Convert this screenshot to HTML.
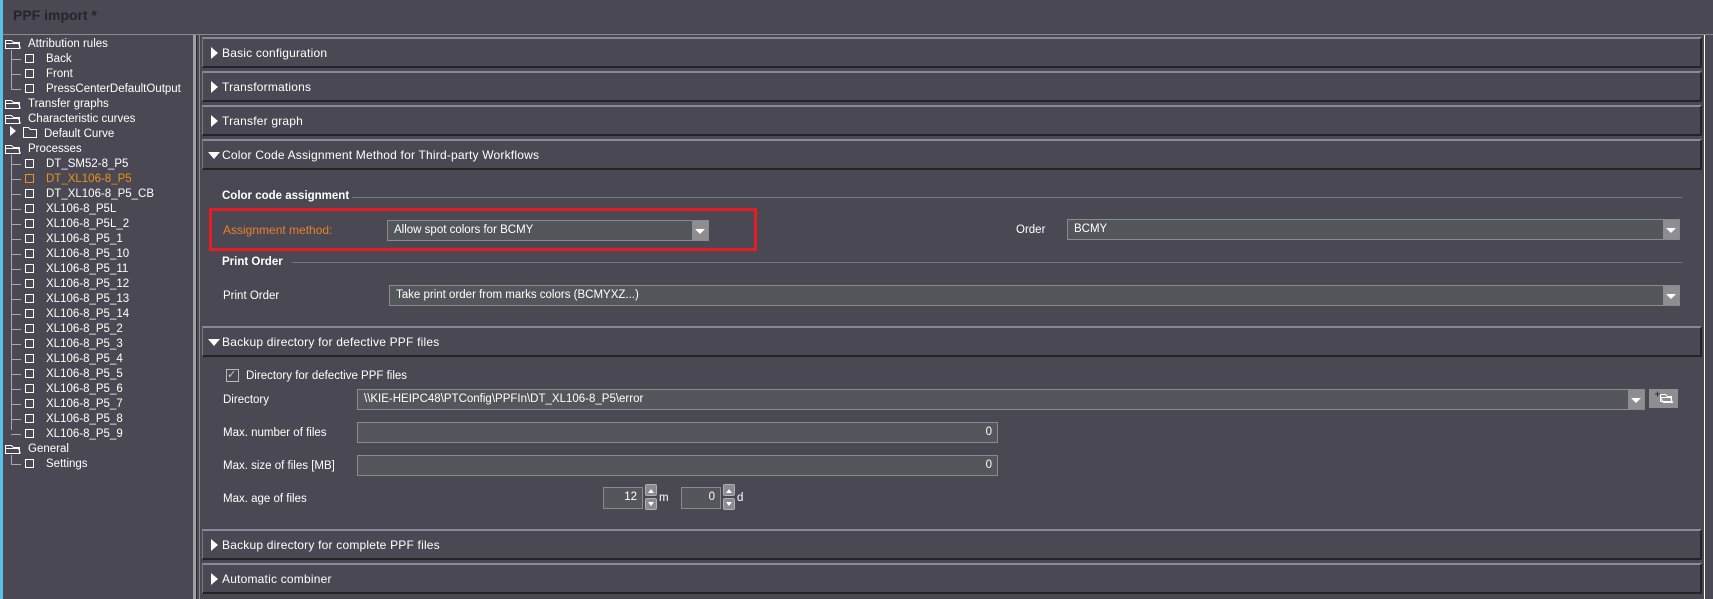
<!DOCTYPE html>
<html><head><meta charset="utf-8"><style>
*{margin:0;padding:0;box-sizing:border-box}
body{width:1713px;height:599px;background:#4a4852;position:relative;overflow:hidden;font-family:"Liberation Sans",sans-serif;font-size:11.5px;color:#fff}
.a{position:absolute}
.t{position:absolute;white-space:nowrap;line-height:14px}
.hd{position:absolute;left:202px;width:1500px;height:31px;border-top:2px solid #8a8894;border-left:1px solid #7a7882;border-right:2px solid #242328;border-bottom:2px solid #242328;background:#4a4852}
.hd span{position:absolute;left:19px;top:7px;font-size:12px;letter-spacing:.2px;white-space:nowrap}
.tri{position:absolute;left:8px;top:8px;width:0;height:0;border-top:6px solid transparent;border-bottom:6px solid transparent;border-left:7px solid #fff}
.trd{position:absolute;left:5px;top:11px;width:0;height:0;border-left:6px solid transparent;border-right:6px solid transparent;border-top:7px solid #fff}
.f{position:absolute;background:#53565a;border:1px solid #8a8a8c;height:21px}
.f span{position:absolute;top:3px;white-space:nowrap}
.cb{position:absolute;right:0;top:0;width:16px;height:19px;background:#8e8e92}
.cb:after{content:"";position:absolute;left:3px;top:8px;border-left:5px solid transparent;border-right:5px solid transparent;border-top:5px solid #fff}
.sq{position:absolute;width:9px;height:9px;border:1px solid #fff}
.sb{position:absolute;width:12px;height:12px;background:#8a8a90;border:1px solid #b0b0b4;border-radius:2px}
</style></head><body>
<div class="a" style="left:0;top:0;width:3px;height:599px;background:#5bc0e8"></div>
<div class="t" style="left:13px;top:8px;font-size:14px;font-weight:bold;color:#26252a">PPF import *</div>
<div class="a" style="left:3px;top:34px;width:1710px;height:1px;background:#8a8a8e"></div>
<div class="a" style="left:193px;top:35px;width:3px;height:564px;background:#a0a0a4"></div>
<div class="a" style="left:196px;top:35px;width:1px;height:564px;background:#2e2d33"></div>
<div class="a" style="left:199px;top:35px;width:1px;height:564px;background:#8a8a8e"></div>
<div class="a" style="left:1704px;top:35px;width:1px;height:564px;background:#fff"></div>

<svg class="a" style="left:0;top:0" width="193" height="599">
<g fill="none" stroke="#fff" stroke-width="1">
<path d="M5.5 40.5h6l2 2h6v6h-14z M5.5 43.5h13l2 5"/>
<path d="M5.5 100.5h6l2 2h6v6h-14z M5.5 103.5h13l2 5"/>
<path d="M5.5 115.5h6l2 2h6v6h-14z M5.5 118.5h13l2 5"/>
<path d="M5.5 145.5h6l2 2h6v6h-14z M5.5 148.5h13l2 5"/>
<path d="M5.5 445.5h6l2 2h6v6h-14z M5.5 448.5h13l2 5"/>
<path d="M23.5 127.5h5l2 2h6v8h-13z"/>
</g>
<path d="M10 126l6 5-6 5z" fill="#fff"/>
<g stroke="#aaa" stroke-width="1">
<path d="M11.5 50v39M11 59.5h10M11 74.5h10M11 89.5h10"/>
<path d="M11.5 155v275M11 164.5h10M11 179.5h10M11 194.5h10M11 209.5h10M11 224.5h10M11 239.5h10M11 254.5h10M11 269.5h10M11 284.5h10M11 299.5h10M11 314.5h10M11 329.5h10M11 344.5h10M11 359.5h10M11 374.5h10M11 389.5h10M11 404.5h10M11 419.5h10M11 434.5h10"/>
<path d="M11.5 455v9M11 464.5h10"/>
</g>
</svg>
<div class="t" style="left:28px;top:37px">Attribution rules</div>
<div class="sq" style="left:25px;top:54px"></div><div class="t" style="left:46px;top:52px">Back</div>
<div class="sq" style="left:25px;top:69px"></div><div class="t" style="left:46px;top:67px">Front</div>
<div class="sq" style="left:25px;top:84px"></div><div class="t" style="left:46px;top:82px">PressCenterDefaultOutput</div>
<div class="t" style="left:28px;top:97px">Transfer graphs</div>
<div class="t" style="left:28px;top:112px">Characteristic curves</div>
<div class="t" style="left:44px;top:127px">Default Curve</div>
<div class="t" style="left:28px;top:142px">Processes</div>
<div class="sq" style="left:25px;top:159px"></div><div class="t" style="left:46px;top:157px">DT_SM52-8_P5</div>
<div class="sq" style="left:25px;top:174px;border-color:#f0901a"></div><div class="t" style="left:46px;top:172px;color:#f0901a">DT_XL106-8_P5</div>
<div class="sq" style="left:25px;top:189px"></div><div class="t" style="left:46px;top:187px">DT_XL106-8_P5_CB</div>
<div class="sq" style="left:25px;top:204px"></div><div class="t" style="left:46px;top:202px">XL106-8_P5L</div>
<div class="sq" style="left:25px;top:219px"></div><div class="t" style="left:46px;top:217px">XL106-8_P5L_2</div>
<div class="sq" style="left:25px;top:234px"></div><div class="t" style="left:46px;top:232px">XL106-8_P5_1</div>
<div class="sq" style="left:25px;top:249px"></div><div class="t" style="left:46px;top:247px">XL106-8_P5_10</div>
<div class="sq" style="left:25px;top:264px"></div><div class="t" style="left:46px;top:262px">XL106-8_P5_11</div>
<div class="sq" style="left:25px;top:279px"></div><div class="t" style="left:46px;top:277px">XL106-8_P5_12</div>
<div class="sq" style="left:25px;top:294px"></div><div class="t" style="left:46px;top:292px">XL106-8_P5_13</div>
<div class="sq" style="left:25px;top:309px"></div><div class="t" style="left:46px;top:307px">XL106-8_P5_14</div>
<div class="sq" style="left:25px;top:324px"></div><div class="t" style="left:46px;top:322px">XL106-8_P5_2</div>
<div class="sq" style="left:25px;top:339px"></div><div class="t" style="left:46px;top:337px">XL106-8_P5_3</div>
<div class="sq" style="left:25px;top:354px"></div><div class="t" style="left:46px;top:352px">XL106-8_P5_4</div>
<div class="sq" style="left:25px;top:369px"></div><div class="t" style="left:46px;top:367px">XL106-8_P5_5</div>
<div class="sq" style="left:25px;top:384px"></div><div class="t" style="left:46px;top:382px">XL106-8_P5_6</div>
<div class="sq" style="left:25px;top:399px"></div><div class="t" style="left:46px;top:397px">XL106-8_P5_7</div>
<div class="sq" style="left:25px;top:414px"></div><div class="t" style="left:46px;top:412px">XL106-8_P5_8</div>
<div class="sq" style="left:25px;top:429px"></div><div class="t" style="left:46px;top:427px">XL106-8_P5_9</div>
<div class="t" style="left:28px;top:442px">General</div>
<div class="sq" style="left:25px;top:459px"></div><div class="t" style="left:46px;top:457px">Settings</div>

<div class="hd" style="top:37px"><div class="tri"></div><span>Basic configuration</span></div>
<div class="hd" style="top:71px"><div class="tri"></div><span>Transformations</span></div>
<div class="hd" style="top:105px"><div class="tri"></div><span>Transfer graph</span></div>
<div class="hd" style="top:139px"><div class="trd"></div><span>Color Code Assignment Method for Third-party Workflows</span></div>

<div class="t" style="left:222px;top:189px;font-weight:bold">Color code assignment</div>
<div class="a" style="left:352px;top:197px;width:1330px;height:1px;background:#77767e"></div>
<div class="a" style="left:209px;top:208px;width:548px;height:43px;border:3px solid #e81c24"></div>
<div class="t" style="left:223px;top:223px;color:#e8822c;font-size:12px">Assignment method:</div>
<div class="f" style="left:387px;top:220px;width:322px"><span style="left:6px">Allow spot colors for BCMY</span><div class="cb"></div></div>
<div class="t" style="left:1016px;top:223px">Order</div>
<div class="f" style="left:1067px;top:219px;width:613px"><span style="left:6px">BCMY</span><div class="cb"></div></div>
<div class="t" style="left:222px;top:255px;font-weight:bold">Print Order</div>
<div class="a" style="left:292px;top:262px;width:1390px;height:1px;background:#77767e"></div>
<div class="t" style="left:223px;top:289px">Print Order</div>
<div class="f" style="left:389px;top:285px;width:1291px"><span style="left:6px">Take print order from marks colors (BCMYXZ...)</span><div class="cb"></div></div>

<div class="hd" style="top:326px"><div class="trd"></div><span>Backup directory for defective PPF files</span></div>
<div class="a" style="left:226px;top:369px;width:13px;height:13px;border:1px solid #bbb"></div>
<div class="t" style="left:227px;top:368px;font-size:11px;color:#ccc">✓</div>
<div class="t" style="left:246px;top:369px">Directory for defective PPF files</div>
<div class="t" style="left:223px;top:393px">Directory</div>
<div class="f" style="left:357px;top:389px;width:1288px"><span style="left:6px">\\KIE-HEIPC48\PTConfig\PPFIn\DT_XL106-8_P5\error</span><div class="cb"></div></div>
<div class="a" style="left:1649px;top:389px;width:29px;height:19px;background:#8e8e92"></div>
<svg class="a" style="left:1652px;top:390px" width="24" height="17"><g fill="none" stroke="#fff"><path d="M8.5 4.5h5l2 2h4v5h-11z M8.5 7.5h10l2 5h-9z"/></g><path d="M3 4h5M5.5 1.5v5" stroke="#333"/></svg>
<div class="t" style="left:223px;top:426px">Max. number of files</div>
<div class="f" style="left:357px;top:422px;width:641px"><span style="right:5px">0</span></div>
<div class="t" style="left:223px;top:459px">Max. size of files [MB]</div>
<div class="f" style="left:357px;top:455px;width:641px"><span style="right:5px">0</span></div>
<div class="t" style="left:223px;top:492px">Max. age of files</div>
<div class="f" style="left:603px;top:487px;width:40px;height:22px"><span style="right:5px">12</span></div>
<div class="sb" style="left:645px;top:484px"></div><div class="sb" style="left:645px;top:498px"></div>
<div class="t" style="left:659px;top:491px">m</div>
<div class="f" style="left:681px;top:487px;width:40px;height:22px"><span style="right:5px">0</span></div>
<div class="sb" style="left:723px;top:484px"></div><div class="sb" style="left:723px;top:498px"></div>
<div class="t" style="left:737px;top:491px">d</div>
<svg class="a" style="left:0;top:0" width="760" height="520"><g fill="#fff"><path d="M648 493l3-4 3 4z M648 502l3 4 3-4z M726 493l3-4 3 4z M726 502l3 4 3-4z"/></g></svg>

<div class="hd" style="top:529px"><div class="tri"></div><span>Backup directory for complete PPF files</span></div>
<div class="hd" style="top:563px"><div class="tri"></div><span>Automatic combiner</span></div>
</body></html>
